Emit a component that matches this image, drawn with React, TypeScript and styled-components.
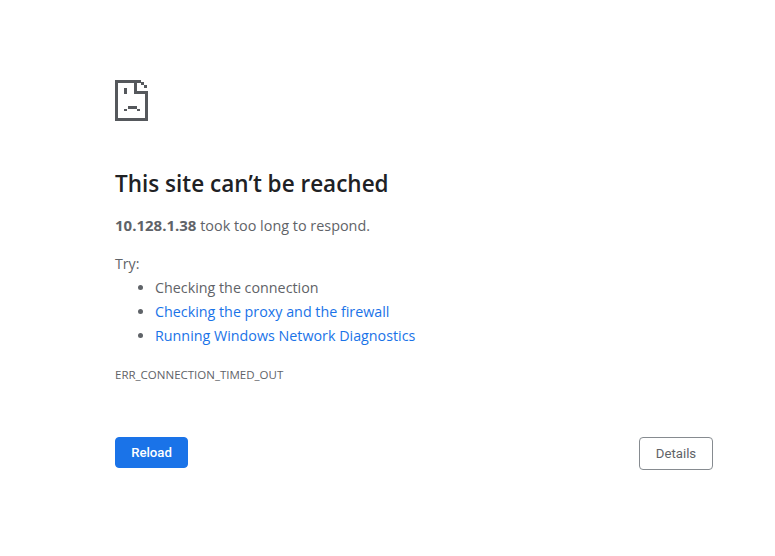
import styled, { createGlobalStyle } from 'styled-components';

const GlobalStyle = createGlobalStyle`
    html, body {
        margin: 0;
        padding: 0;
        background: #fff;
    }
`;

const Page = styled.div`
    box-sizing: border-box;
    width: 775px;
    height: 556px;
    padding: 80px 62px 0 115px;
    font-family: 'Open Sans', 'Liberation Sans', sans-serif;
    color: #5f6368;
    overflow: hidden;
`;

const SadFile = styled.svg`
    display: block;
    width: 34px;
    height: 42px;
    margin-bottom: 47px;
`;

const Title = styled.h1`
    margin: 0 0 14px;
    font-size: 22.5px;
    line-height: 30px;
    font-weight: 550;
    color: #202124;
`;

const Summary = styled.p`
    margin: 0 0 14px;
    font-size: 14.4px;
    line-height: 24px;
    b {
        font-size: 15px;
        font-weight: 700;
    }
`;

const TryLabel = styled.div`
    font-size: 14.2px;
    line-height: 24px;
`;

const Suggestions = styled.ul`
    margin: 0 0 19px;
    padding: 0 0 0 40px;
    font-size: 14.3px;
    line-height: 24px;
`;

const Suggestion = styled.li<{ $link?: boolean }>`
    color: ${(props) => (props.$link ? '#1a73e8' : '#5f6368')};
    &::marker {
        color: #5f6368;
    }
`;

const ErrorCode = styled.div`
    font-size: 11.5px;
    line-height: 16px;
    margin-bottom: 54px;
`;

const Buttons = styled.div`
    display: flex;
    justify-content: space-between;
    align-items: flex-start;
`;

const Button = styled.button<{ $primary?: boolean }>`
    box-sizing: border-box;
    width: ${(props) => (props.$primary ? '73px' : '74px')};
    height: ${(props) => (props.$primary ? '31px' : '33px')};
    padding: 0;
    border-radius: 4px;
    border: 1px solid ${(props) => (props.$primary ? '#1a73e8' : '#868b90')};
    background: ${(props) => (props.$primary ? '#1a73e8' : '#fff')};
    color: ${(props) => (props.$primary ? '#fff' : '#5f6368')};
    font-family: 'Roboto', 'Liberation Sans', sans-serif;
    font-size: 13.2px;
    font-weight: ${(props) => (props.$primary ? 500 : 400)};
`;

function App() {
    return (
        <Page>
            <GlobalStyle />
            <SadFile viewBox="0 0 34 42">
                <g fill="#55585c">
                    <rect x="0" y="0" width="26" height="3" />
                    <rect x="0" y="0" width="3" height="41" />
                    <rect x="0" y="38" width="33" height="3" />
                    <rect x="30" y="11" width="3" height="30" />
                    <rect x="19" y="0" width="3" height="13" />
                    <rect x="19" y="11" width="14" height="3" />
                    <rect x="26" y="2" width="3" height="3" />
                    <rect x="29" y="5" width="3" height="3" />
                    <rect x="9" y="8" width="3" height="6" />
                    <rect x="13" y="26" width="9" height="3" />
                    <rect x="9" y="29" width="3" height="2" />
                    <rect x="22" y="29" width="3" height="2" />
                </g>
            </SadFile>
            <Title>This site can’t be reached</Title>
            <Summary>
                <b>10.128.1.38</b> took too long to respond.
            </Summary>
            <TryLabel>Try:</TryLabel>
            <Suggestions>
                <Suggestion>Checking the connection</Suggestion>
                <Suggestion $link>Checking the proxy and the firewall</Suggestion>
                <Suggestion $link>Running Windows Network Diagnostics</Suggestion>
            </Suggestions>
            <ErrorCode>ERR_CONNECTION_TIMED_OUT</ErrorCode>
            <Buttons>
                <Button $primary>Reload</Button>
                <Button>Details</Button>
            </Buttons>
        </Page>
    );
}

export default App;
